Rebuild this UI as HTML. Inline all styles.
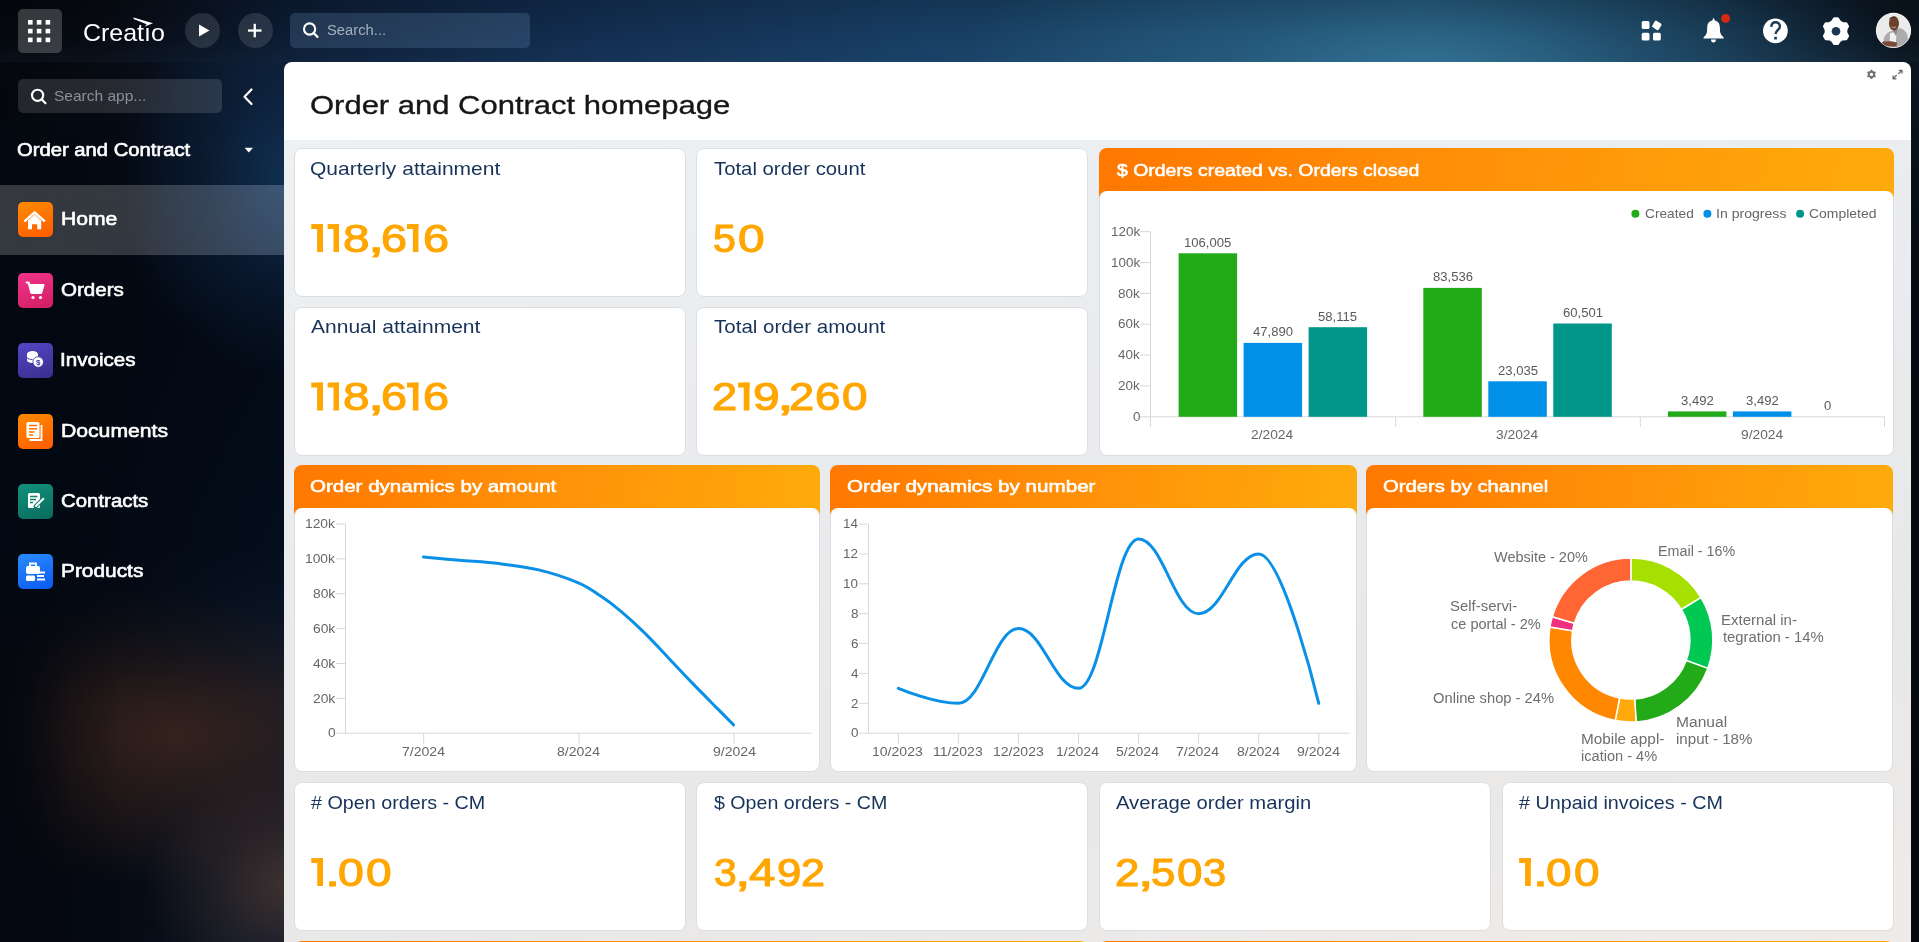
<!DOCTYPE html><html><head><meta charset="utf-8"><style>
*{margin:0;padding:0;box-sizing:border-box}
html,body{width:1919px;height:942px;overflow:hidden;background:#04070c;font-family:"Liberation Sans",sans-serif}
.t{position:absolute;white-space:nowrap;line-height:1;will-change:transform}
.abs{position:absolute}
.card{position:absolute;background:#fff;border:1px solid #dedede;border-radius:8px}
.hcard{position:absolute;border-radius:8px;background:linear-gradient(100deg,#ff7800 0%,#ff9208 50%,#ffab0c 100%) 0 0/100% 60px no-repeat}
.hcard .body{position:absolute;left:0;right:0;bottom:0;background:#fff;border-radius:8px;border:1px solid #dedede;border-top:none}
svg{position:absolute;left:0;top:0;overflow:visible}
</style></head><body><div class="abs" style="left:0;top:0;width:1919px;height:942px;background:radial-gradient(ellipse 140px 120px at 285px 885px, rgba(82,58,46,0.7) 0%, rgba(66,46,38,0.38) 50%, rgba(40,30,26,0) 100%),radial-gradient(ellipse 70px 900px at 0px 900px, rgba(4,8,18,0.9) 0%, rgba(4,8,18,0) 100%),radial-gradient(ellipse 300px 150px at 175px 735px, rgba(56,35,29,0.92) 0%, rgba(46,30,26,0.62) 45%, rgba(24,18,18,0) 100%),radial-gradient(ellipse 170px 110px at 60px 920px, rgba(5,9,18,0.85) 0%, rgba(5,9,18,0) 100%),radial-gradient(ellipse 470px 190px at 1430px 80px, rgba(52,118,152,0.85) 0%, rgba(42,100,135,0.5) 45%, rgba(30,70,100,0) 100%),linear-gradient(90deg,#04070c 0%,#070b13 6%,#0c1b32 15%,#122c4e 30%,#173d62 48%,#1b4668 62%,#1f4e6c 74%,#163650 84%,#0e1f30 93%,#0a121b 100%)"></div>
<div class="abs" style="left:0;top:0;width:1919px;height:62px;background:linear-gradient(180deg,rgba(0,0,0,0.14) 0%,rgba(0,0,0,0) 55%,rgba(80,150,200,0.06) 100%)"></div>
<div class="abs" style="left:1905px;top:62px;width:14px;height:880px;background:linear-gradient(180deg,#0b1520 0%,#070b11 25%,#05080c 100%)"></div>
<div class="abs" style="left:0;top:62px;width:284px;height:880px;background:linear-gradient(180deg,rgba(2,8,18,0) 0%,rgba(2,8,18,0.5) 12%,rgba(2,8,18,0.85) 30%,rgba(2,9,20,0.75) 55%,rgba(4,10,22,0) 72%)"></div>
<div class="abs" style="left:0;top:62px;width:284px;height:400px;background:radial-gradient(ellipse 170px 200px at 290px 115px, rgba(20,56,96,0.78) 0%, rgba(16,44,78,0.4) 50%, rgba(10,25,45,0) 100%)"></div>
<div class="abs" style="left:0;top:600px;width:120px;height:342px;background:linear-gradient(90deg,rgba(4,7,14,0.7),rgba(4,7,14,0))"></div>
<div class="abs" style="left:18px;top:9px;width:44px;height:44px;border-radius:5px;background:rgba(255,255,255,0.2)"></div>
<svg width="1919" height="62"><rect x="28.0" y="20.0" width="4.6" height="4.6" fill="#fff"/><rect x="36.8" y="20.0" width="4.6" height="4.6" fill="#fff"/><rect x="45.6" y="20.0" width="4.6" height="4.6" fill="#fff"/><rect x="28.0" y="28.8" width="4.6" height="4.6" fill="#fff"/><rect x="36.8" y="28.8" width="4.6" height="4.6" fill="#fff"/><rect x="45.6" y="28.8" width="4.6" height="4.6" fill="#fff"/><rect x="28.0" y="37.6" width="4.6" height="4.6" fill="#fff"/><rect x="36.8" y="37.6" width="4.6" height="4.6" fill="#fff"/><rect x="45.6" y="37.6" width="4.6" height="4.6" fill="#fff"/></svg>
<div class="t" style="left:82.96px;top:21.00px;font-size:24px;color:#ffffff;transform:scaleX(1.0395);transform-origin:0 0;">Creatıo</div>
<svg width="1919" height="62"><path d="M133.6 17.4 L153 23.3 L144.8 26.4 L146.6 24.3 L133.6 19 Z" fill="#fff"/></svg>
<div class="abs" style="left:185px;top:13px;width:35px;height:35px;border-radius:50%;background:rgba(255,255,255,0.12)"></div>
<div class="abs" style="left:237.8px;top:13px;width:35px;height:35px;border-radius:50%;background:rgba(255,255,255,0.12)"></div>
<svg width="1919" height="62"><path d="M199 24.6 L209.5 30.5 L199 36.5 Z" fill="#fff"/><rect x="248" y="29.4" width="13.5" height="2.3" fill="#fff"/><rect x="253.6" y="23.8" width="2.3" height="13.5" fill="#fff"/></svg>
<div class="abs" style="left:290px;top:13px;width:240px;height:35px;border-radius:5px;background:rgba(120,160,200,0.22)"></div>
<svg width="1919" height="62"><circle cx="309.6" cy="29" r="5.6" fill="none" stroke="#fff" stroke-width="2.1"/><path d="M313.6 33 L317.5 36.9" stroke="#fff" stroke-width="2.2" stroke-linecap="round"/></svg>
<div class="t" style="left:326.94px;top:23.00px;font-size:14px;color:#a3b0bd;transform:scaleX(1.0556);transform-origin:0 0;">Search...</div>
<svg width="1919" height="62">
<rect x="1641.7" y="21" width="7.8" height="8.1" rx="1.6" fill="#fff"/>
<rect x="1641.7" y="32.8" width="7.8" height="7.8" rx="1.6" fill="#fff"/>
<rect x="1653" y="32.8" width="7.8" height="7.8" rx="1.6" fill="#fff"/>
<rect x="1653" y="21.6" width="7.6" height="7.6" rx="1.4" fill="#fff" transform="rotate(32 1656.8 25.4)"/>
<path d="M1713.5 17.8 L1714.9 20.4 C1718.6 21.2 1719.8 24 1719.9 27.5 L1720.1 31.8 C1720.4 34 1721.6 35.5 1723.6 37.2 L1723.6 38.4 L1703.6 38.4 L1703.6 37.2 C1705.6 35.5 1706.7 34 1707 31.8 L1707.2 27.5 C1707.3 24 1708.5 21.2 1712.2 20.4 Z M1711 39.6 H1716 C1716 41.3 1715 42.6 1713.5 42.6 C1712 42.6 1711 41.3 1711 39.6 Z" fill="#fff"/>
<circle cx="1725.6" cy="18.4" r="4.4" fill="#d8290f"/>
<circle cx="1775.4" cy="30.8" r="12.4" fill="#fff"/>
<path d="M1771.3 26.9 C1771.5 23.9 1773.3 22.3 1775.6 22.3 C1778.1 22.3 1779.9 24 1779.9 26.4 C1779.9 29.6 1775.6 30.2 1775.6 33.9" fill="none" stroke="#1a3a55" stroke-width="2.4" stroke-linecap="butt"/>
<rect x="1774.2" y="36.7" width="2.7" height="2.7" rx="0.5" fill="#1a3a55"/>
<path d="M1834.33 18.51 L1837.67 18.51 L1839.90 21.78 L1842.21 23.11 L1846.15 23.41 L1847.83 26.30 L1846.11 29.87 L1846.11 32.53 L1847.83 36.10 L1846.15 38.99 L1842.21 39.29 L1839.90 40.62 L1837.67 43.89 L1834.33 43.89 L1832.10 40.62 L1829.79 39.29 L1825.85 38.99 L1824.17 36.10 L1825.89 32.53 L1825.89 29.87 L1824.17 26.30 L1825.85 23.41 L1829.79 23.11 L1832.10 21.78Z" fill="#fff" stroke="#fff" stroke-width="2.4" stroke-linejoin="round"/><circle cx="1836" cy="31.2" r="4.3" fill="#1a3650"/></svg>
<svg width="1919" height="62"><defs><clipPath id="av"><circle cx="1893.5" cy="30.4" r="17"/></clipPath></defs><circle cx="1893.5" cy="30.4" r="17.6" fill="#f7f7f7"/><g clip-path="url(#av)"><rect x="1876" y="13" width="36" height="36" fill="#ecebeb"/><path d="M1881 50 L1884 38 C1886 33 1890 31 1894 30.5 L1899 28 C1903 28.5 1906 31 1907.5 35 L1909 50 Z" fill="#aeabae"/><path d="M1890 33 L1896.5 32 L1895.5 50 L1889.5 50 Z" fill="#f2f2f2"/><path d="M1893 31 L1898 29 L1896 36 Z" fill="#8e8a8e"/><ellipse cx="1894" cy="23.5" rx="5" ry="7.2" fill="#6b412d"/><path d="M1889 20 C1889 15.5 1899 15.5 1899.2 20.5 L1898.5 18.5 C1896 16.5 1891 17 1889.5 19.5 Z" fill="#2a1a14"/><path d="M1891.5 26.8 C1892.8 27.8 1894.8 27.8 1896 26.8" stroke="#d9c2b5" stroke-width="0.8" fill="none"/><path d="M1882 42 C1886 41 1892 41 1897 42.5 L1896.5 46.5 C1891 47 1886 46.5 1882.5 45.5 Z" fill="#7a4a35"/></g></svg>
<div class="abs" style="left:18px;top:79px;width:204px;height:34px;border-radius:5px;background:rgba(255,255,255,0.13)"></div>
<svg width="300" height="200"><circle cx="37.6" cy="95.3" r="5.6" fill="none" stroke="#fff" stroke-width="2.1"/><path d="M41.6 99.3 L45.5 103.2" stroke="#fff" stroke-width="2.2" stroke-linecap="round"/><path d="M251.5 89.5 L244.5 96.8 L251.5 104" fill="none" stroke="#fff" stroke-width="2.2" stroke-linecap="round" stroke-linejoin="round"/><path d="M244.6 147.8 L253 147.8 L248.8 152.6 Z" fill="#fff"/></svg>
<div class="t" style="left:53.97px;top:88.00px;font-size:15px;color:#8c9199;transform:scaleX(1.0345);transform-origin:0 0;">Search app...</div>
<div class="t" style="left:16.58px;top:141.00px;font-size:18px;color:#ffffff;transform:scaleX(1.1242);transform-origin:0 0;-webkit-text-stroke:0.6px #fff;">Order and Contract</div>
<div class="abs" style="left:0;top:185px;width:284px;height:70px;background:linear-gradient(100deg,rgba(255,255,255,0.2) 0%,rgba(255,255,255,0.19) 50%,rgba(175,195,220,0.28) 100%)"></div>
<div class="abs" style="left:18px;top:202px;width:35px;height:35px;border-radius:5px;background:linear-gradient(160deg,#ff8c00,#ff5a00)"></div>
<div class="t" style="left:60.83px;top:210.00px;font-size:18px;color:#ffffff;transform:scaleX(1.1739);transform-origin:0 0;-webkit-text-stroke:0.6px #fff;">Home</div>
<div class="abs" style="left:18px;top:273px;width:35px;height:35px;border-radius:5px;background:linear-gradient(160deg,#f2348a,#d11d62)"></div>
<div class="t" style="left:60.86px;top:281.00px;font-size:18px;color:#ffffff;transform:scaleX(1.1415);transform-origin:0 0;-webkit-text-stroke:0.6px #fff;">Orders</div>
<div class="abs" style="left:18px;top:343px;width:35px;height:35px;border-radius:5px;background:linear-gradient(160deg,#5446c8,#3a2d8a)"></div>
<div class="t" style="left:59.71px;top:351.00px;font-size:18px;color:#ffffff;transform:scaleX(1.1429);transform-origin:0 0;-webkit-text-stroke:0.6px #fff;">Invoices</div>
<div class="abs" style="left:18px;top:413.7px;width:35px;height:35px;border-radius:5px;background:linear-gradient(160deg,#ff8a00,#ff5c00)"></div>
<div class="t" style="left:60.82px;top:422.00px;font-size:18px;color:#ffffff;transform:scaleX(1.1753);transform-origin:0 0;-webkit-text-stroke:0.6px #fff;">Documents</div>
<div class="abs" style="left:18px;top:483.7px;width:35px;height:35px;border-radius:5px;background:linear-gradient(160deg,#11917c,#0b6b5c)"></div>
<div class="t" style="left:60.87px;top:492.00px;font-size:18px;color:#ffffff;transform:scaleX(1.1333);transform-origin:0 0;-webkit-text-stroke:0.6px #fff;">Contracts</div>
<div class="abs" style="left:18px;top:554.1px;width:35px;height:35px;border-radius:5px;background:linear-gradient(160deg,#2a8cff,#0a5aee)"></div>
<div class="t" style="left:60.84px;top:562.00px;font-size:18px;color:#ffffff;transform:scaleX(1.1594);transform-origin:0 0;-webkit-text-stroke:0.6px #fff;">Products</div>
<svg width="300" height="700">
<path d="M25 220.8 L34.6 212.3 L44.2 220.8" fill="none" stroke="#fff" stroke-width="2.4" stroke-linecap="round" stroke-linejoin="round"/>
<path d="M28 220.5 L34.6 214.6 L41.2 220.5 V229.2 H37.2 V224.2 H32 V229.2 H28 Z" fill="#fff"/>
<path d="M25.8 282.5 H28.6 L31.5 293 H41 L43.5 285 H30" fill="none" stroke="#fff" stroke-width="2.2" stroke-linejoin="round"/>
<path d="M30 285 H43.5 L41 293 H31.5 Z" fill="#fff"/>
<circle cx="33" cy="297.5" r="1.6" fill="#fff"/><circle cx="40.5" cy="297.5" r="1.6" fill="#fff"/>
<ellipse cx="32.5" cy="354" rx="5.5" ry="3" fill="#fff"/>
<path d="M27 354 v6 c0 1.8 2.5 3 5.5 3 c3 0 5.5 -1.2 5.5 -3 v-6" fill="#fff"/>
<path d="M27 357.5 c1 1.4 3 2 5.5 2" stroke="#4a3cb0" stroke-width="1" fill="none"/>
<circle cx="38.2" cy="362" r="5.3" fill="#fff" stroke="#4030a0" stroke-width="0.8"/>
<text x="38.2" y="365" font-size="8" font-weight="700" fill="#4030a0" text-anchor="middle" font-family="Liberation Sans">$</text>
<rect x="26.5" y="422" width="13" height="16" rx="1.5" fill="#fff"/>
<path d="M41.5 425 V440 H29.5" fill="none" stroke="#fff" stroke-width="1.8"/>
<path d="M29 425.5 H37 M29 428.7 H37 M29 432 H34.5 M29 435 H33" stroke="#ff7000" stroke-width="1.4"/>
<rect x="28" y="493" width="12" height="15" rx="1.5" fill="#fff"/>
<path d="M30 496.5 H37.5 M30 499.5 H36 M30 502.5 H33" stroke="#0e8070" stroke-width="1.5"/>
<path d="M43.5 498.5 L35.5 506.5" stroke="#0e8070" stroke-width="4" stroke-linecap="round"/>
<path d="M43.3 498.7 L36 506" stroke="#fff" stroke-width="2" stroke-linecap="round"/>
<rect x="26" y="566" width="14" height="8" rx="2" fill="#fff"/>
<path d="M30 566 V563.5 H36 V566" fill="none" stroke="#fff" stroke-width="1.8"/>
<rect x="26" y="575.5" width="9" height="5.5" rx="1.5" fill="#fff"/>
<path d="M36.5 572.5 H45 M37 576 H44 M37 579.5 H45" stroke="#fff" stroke-width="1.8"/>
</svg>
<div class="abs" style="left:284px;top:62px;width:1627px;height:880px;border-radius:8px 8px 0 0;background:#fff;overflow:hidden"><div class="abs" style="left:0;top:78px;width:1627px;height:802px;background:linear-gradient(170deg,#edf1f4 0%,#e9ebee 40%,#e8e8e8 70%,#efebe8 100%)"></div></div>
<div class="t" style="left:309.81px;top:92.00px;font-size:26px;color:#161616;transform:scaleX(1.1914);transform-origin:0 0;font-weight:400;-webkit-text-stroke:0.35px #161616;">Order and Contract homepage</div>
<svg width="1919" height="100"><path d="M1870.89 69.74 L1872.11 69.74 L1872.88 71.07 L1873.69 71.54 L1875.23 71.54 L1875.84 72.60 L1875.07 73.93 L1875.07 74.87 L1875.84 76.20 L1875.23 77.26 L1873.69 77.26 L1872.88 77.73 L1872.11 79.06 L1870.89 79.06 L1870.12 77.73 L1869.31 77.26 L1867.77 77.26 L1867.16 76.20 L1867.93 74.87 L1867.93 73.93 L1867.16 72.60 L1867.77 71.54 L1869.31 71.54 L1870.12 71.07Z" fill="#707070"/><circle cx="1871.5" cy="74.4" r="1.7" fill="#fff"/><path d="M1898.3 73.9 L1901.6 70.6 M1898.8 70.3 H1902 V73.5 M1896.7 75.1 L1893.4 78.4 M1893.1 75.5 V78.7 H1896.3" fill="none" stroke="#6f6f6f" stroke-width="1.35"/></svg>
<div class="card" style="left:293.5px;top:148.3px;width:392px;height:149px"></div>
<div class="t" style="left:309.82px;top:161.00px;font-size:17.8px;color:#17335a;transform:scaleX(1.1812);transform-origin:0 0;">Quarterly attainment</div>
<div class="t" style="left:343.01px;top:219.00px;font-size:39px;color:#ffa600;transform:scaleX(1.2222);transform-origin:0 0;-webkit-text-stroke:1.1px #ffa600;">8</div>
<div class="t" style="left:368.25px;top:219.00px;font-size:39px;color:#ffa600;transform:scaleX(1.5000);transform-origin:0 0;-webkit-text-stroke:1.1px #ffa600;">,</div>
<div class="t" style="left:380.95px;top:219.00px;font-size:39px;color:#ffa600;transform:scaleX(1.2000);transform-origin:0 0;-webkit-text-stroke:1.1px #ffa600;">6</div>
<div class="t" style="left:423.15px;top:219.00px;font-size:39px;color:#ffa600;transform:scaleX(1.2000);transform-origin:0 0;-webkit-text-stroke:1.1px #ffa600;">6</div>
<svg width="1919" height="942"><rect x="311.25" y="224.10" width="11.75" height="4.9" fill="#ffa600"/><rect x="317.10" y="224.10" width="5.90" height="27.90" fill="#ffa600"/><rect x="327.70" y="224.10" width="11.30" height="4.9" fill="#ffa600"/><rect x="333.50" y="224.10" width="5.50" height="27.90" fill="#ffa600"/><rect x="407.00" y="224.10" width="11.40" height="4.9" fill="#ffa600"/><rect x="412.90" y="224.10" width="5.50" height="27.90" fill="#ffa600"/></svg>
<div class="card" style="left:696.2px;top:148.3px;width:392px;height:149px"></div>
<div class="t" style="left:713.70px;top:161.00px;font-size:17.8px;color:#17335a;transform:scaleX(1.1429);transform-origin:0 0;">Total order count</div>
<div class="t" style="left:712.74px;top:219.00px;font-size:39px;color:#ffa600;transform:scaleX(1.0556);transform-origin:0 0;-webkit-text-stroke:1.1px #ffa600;">5</div>
<div class="t" style="left:738.22px;top:219.00px;font-size:39px;color:#ffa600;transform:scaleX(1.2263);transform-origin:0 0;-webkit-text-stroke:1.1px #ffa600;">0</div>
<div class="card" style="left:293.5px;top:306.8px;width:392px;height:149px"></div>
<div class="t" style="left:311.00px;top:319.00px;font-size:17.8px;color:#17335a;transform:scaleX(1.1818);transform-origin:0 0;">Annual attainment</div>
<div class="t" style="left:343.01px;top:377.00px;font-size:39px;color:#ffa600;transform:scaleX(1.2222);transform-origin:0 0;-webkit-text-stroke:1.1px #ffa600;">8</div>
<div class="t" style="left:368.25px;top:377.00px;font-size:39px;color:#ffa600;transform:scaleX(1.5000);transform-origin:0 0;-webkit-text-stroke:1.1px #ffa600;">,</div>
<div class="t" style="left:380.95px;top:377.00px;font-size:39px;color:#ffa600;transform:scaleX(1.2000);transform-origin:0 0;-webkit-text-stroke:1.1px #ffa600;">6</div>
<div class="t" style="left:423.15px;top:377.00px;font-size:39px;color:#ffa600;transform:scaleX(1.2000);transform-origin:0 0;-webkit-text-stroke:1.1px #ffa600;">6</div>
<svg width="1919" height="942"><rect x="311.25" y="382.60" width="11.75" height="4.9" fill="#ffa600"/><rect x="317.10" y="382.60" width="5.90" height="27.90" fill="#ffa600"/><rect x="327.70" y="382.60" width="11.30" height="4.9" fill="#ffa600"/><rect x="333.50" y="382.60" width="5.50" height="27.90" fill="#ffa600"/><rect x="407.00" y="382.60" width="11.40" height="4.9" fill="#ffa600"/><rect x="412.90" y="382.60" width="5.50" height="27.90" fill="#ffa600"/></svg>
<div class="card" style="left:696.2px;top:306.8px;width:392px;height:149px"></div>
<div class="t" style="left:713.70px;top:319.00px;font-size:17.8px;color:#17335a;transform:scaleX(1.1554);transform-origin:0 0;">Total order amount</div>
<div class="t" style="left:712.23px;top:377.00px;font-size:39px;color:#ffa600;transform:scaleX(1.1611);transform-origin:0 0;-webkit-text-stroke:1.1px #ffa600;">2</div>
<div class="t" style="left:752.78px;top:377.00px;font-size:39px;color:#ffa600;transform:scaleX(1.2333);transform-origin:0 0;-webkit-text-stroke:1.1px #ffa600;">9</div>
<div class="t" style="left:776.60px;top:377.00px;font-size:39px;color:#ffa600;transform:scaleX(1.5500);transform-origin:0 0;-webkit-text-stroke:1.1px #ffa600;">,</div>
<div class="t" style="left:789.23px;top:377.00px;font-size:39px;color:#ffa600;transform:scaleX(1.1611);transform-origin:0 0;-webkit-text-stroke:1.1px #ffa600;">2</div>
<div class="t" style="left:814.89px;top:377.00px;font-size:39px;color:#ffa600;transform:scaleX(1.1778);transform-origin:0 0;-webkit-text-stroke:1.1px #ffa600;">6</div>
<div class="t" style="left:841.58px;top:377.00px;font-size:39px;color:#ffa600;transform:scaleX(1.1737);transform-origin:0 0;-webkit-text-stroke:1.1px #ffa600;">0</div>
<svg width="1919" height="942"><rect x="738.00" y="382.60" width="11.50" height="4.9" fill="#ffa600"/><rect x="743.75" y="382.60" width="5.75" height="27.90" fill="#ffa600"/></svg>
<div class="card" style="left:293.5px;top:782.3px;width:392px;height:149px"></div>
<div class="t" style="left:311.00px;top:795.00px;font-size:17.8px;color:#17335a;transform:scaleX(1.1090);transform-origin:0 0;"># Open orders - CM</div>
<div class="t" style="left:325.35px;top:853.00px;font-size:39px;color:#ffa600;transform:scaleX(1.4000);transform-origin:0 0;-webkit-text-stroke:1.1px #ffa600;">.</div>
<div class="t" style="left:338.46px;top:853.00px;font-size:39px;color:#ffa600;transform:scaleX(1.1895);transform-origin:0 0;-webkit-text-stroke:1.1px #ffa600;">0</div>
<div class="t" style="left:366.37px;top:853.00px;font-size:39px;color:#ffa600;transform:scaleX(1.1789);transform-origin:0 0;-webkit-text-stroke:1.1px #ffa600;">0</div>
<svg width="1919" height="942"><rect x="311.25" y="858.10" width="11.75" height="4.9" fill="#ffa600"/><rect x="317.25" y="858.10" width="5.75" height="27.90" fill="#ffa600"/></svg>
<div class="card" style="left:696.2px;top:782.3px;width:392px;height:149px"></div>
<div class="t" style="left:713.70px;top:795.00px;font-size:17.8px;color:#17335a;transform:scaleX(1.1026);transform-origin:0 0;">$ Open orders - CM</div>
<div class="t" style="left:713.60px;top:853.00px;font-size:39px;color:#ffa600;transform:scaleX(1.0474);transform-origin:0 0;-webkit-text-stroke:1.1px #ffa600;">3</div>
<div class="t" style="left:735.48px;top:853.00px;font-size:39px;color:#ffa600;transform:scaleX(1.4250);transform-origin:0 0;-webkit-text-stroke:1.1px #ffa600;">,</div>
<div class="t" style="left:748.73px;top:853.00px;font-size:39px;color:#ffa600;transform:scaleX(1.2150);transform-origin:0 0;-webkit-text-stroke:1.1px #ffa600;">4</div>
<div class="t" style="left:776.51px;top:853.00px;font-size:39px;color:#ffa600;transform:scaleX(1.1222);transform-origin:0 0;-webkit-text-stroke:1.1px #ffa600;">9</div>
<div class="t" style="left:801.24px;top:853.00px;font-size:39px;color:#ffa600;transform:scaleX(1.1056);transform-origin:0 0;-webkit-text-stroke:1.1px #ffa600;">2</div>
<div class="card" style="left:1098.9px;top:782.3px;width:392px;height:149px"></div>
<div class="t" style="left:1116.40px;top:795.00px;font-size:17.8px;color:#17335a;transform:scaleX(1.1368);transform-origin:0 0;">Average order margin</div>
<div class="t" style="left:1115.11px;top:853.00px;font-size:39px;color:#ffa600;transform:scaleX(1.1222);transform-origin:0 0;-webkit-text-stroke:1.1px #ffa600;">2</div>
<div class="t" style="left:1138.48px;top:853.00px;font-size:39px;color:#ffa600;transform:scaleX(1.4250);transform-origin:0 0;-webkit-text-stroke:1.1px #ffa600;">,</div>
<div class="t" style="left:1150.71px;top:853.00px;font-size:39px;color:#ffa600;transform:scaleX(1.1222);transform-origin:0 0;-webkit-text-stroke:1.1px #ffa600;">5</div>
<div class="t" style="left:1176.78px;top:853.00px;font-size:39px;color:#ffa600;transform:scaleX(1.1737);transform-origin:0 0;-webkit-text-stroke:1.1px #ffa600;">0</div>
<div class="t" style="left:1202.98px;top:853.00px;font-size:39px;color:#ffa600;transform:scaleX(1.0684);transform-origin:0 0;-webkit-text-stroke:1.1px #ffa600;">3</div>
<div class="card" style="left:1501.6px;top:782.3px;width:392px;height:149px"></div>
<div class="t" style="left:1519.10px;top:795.00px;font-size:17.8px;color:#17335a;transform:scaleX(1.1093);transform-origin:0 0;"># Unpaid invoices - CM</div>
<div class="t" style="left:1533.22px;top:853.00px;font-size:39px;color:#ffa600;transform:scaleX(1.3750);transform-origin:0 0;-webkit-text-stroke:1.1px #ffa600;">.</div>
<div class="t" style="left:1546.38px;top:853.00px;font-size:39px;color:#ffa600;transform:scaleX(1.1737);transform-origin:0 0;-webkit-text-stroke:1.1px #ffa600;">0</div>
<div class="t" style="left:1574.28px;top:853.00px;font-size:39px;color:#ffa600;transform:scaleX(1.1737);transform-origin:0 0;-webkit-text-stroke:1.1px #ffa600;">0</div>
<svg width="1919" height="942"><rect x="1519.10" y="858.10" width="11.70" height="4.9" fill="#ffa600"/><rect x="1525.10" y="858.10" width="5.70" height="27.90" fill="#ffa600"/></svg>
<div class="hcard" style="left:1098.9px;top:148.3px;width:794.7px;height:307.5px"><div class="body" style="top:42.5px"></div></div>
<div class="t" style="left:1116.90px;top:162.00px;font-size:17px;color:#ffffff;transform:scaleX(1.1426);transform-origin:0 0;-webkit-text-stroke:0.55px #fff;">$ Orders created vs. Orders closed</div>
<div class="hcard" style="left:293.5px;top:465.3px;width:526.5px;height:306.5px"><div class="body" style="top:42.5px"></div></div>
<div class="t" style="left:310.29px;top:478.00px;font-size:17px;color:#ffffff;transform:scaleX(1.2069);transform-origin:0 0;-webkit-text-stroke:0.55px #fff;">Order dynamics by amount</div>
<div class="hcard" style="left:829.8px;top:465.3px;width:527px;height:306.5px"><div class="body" style="top:42.5px"></div></div>
<div class="t" style="left:846.59px;top:478.00px;font-size:17px;color:#ffffff;transform:scaleX(1.2118);transform-origin:0 0;-webkit-text-stroke:0.55px #fff;">Order dynamics by number</div>
<div class="hcard" style="left:1366.4px;top:465.3px;width:526.8px;height:306.5px"><div class="body" style="top:42.5px"></div></div>
<div class="t" style="left:1383.21px;top:478.00px;font-size:17px;color:#ffffff;transform:scaleX(1.1898);transform-origin:0 0;-webkit-text-stroke:0.55px #fff;">Orders by channel</div>
<div class="hcard" style="left:293.5px;top:940.6px;width:794.7px;height:306px"><div class="body" style="top:42.5px"></div></div>
<div class="hcard" style="left:1098.9px;top:940.6px;width:794.7px;height:306px"><div class="body" style="top:42.5px"></div></div>
<div class="t" style="left:1132.98px;top:411.00px;font-size:12px;color:#666666;transform:scaleX(1.1200);transform-origin:0 0;">0</div>
<div class="t" style="left:1118.42px;top:380.00px;font-size:12px;color:#666666;transform:scaleX(1.1200);transform-origin:0 0;">20k</div>
<div class="t" style="left:1118.42px;top:349.00px;font-size:12px;color:#666666;transform:scaleX(1.1200);transform-origin:0 0;">40k</div>
<div class="t" style="left:1118.42px;top:318.00px;font-size:12px;color:#666666;transform:scaleX(1.1200);transform-origin:0 0;">60k</div>
<div class="t" style="left:1118.42px;top:288.00px;font-size:12px;color:#666666;transform:scaleX(1.1200);transform-origin:0 0;">80k</div>
<div class="t" style="left:1110.58px;top:257.00px;font-size:12px;color:#666666;transform:scaleX(1.1200);transform-origin:0 0;">100k</div>
<div class="t" style="left:1110.58px;top:226.00px;font-size:12px;color:#666666;transform:scaleX(1.1200);transform-origin:0 0;">120k</div>
<div class="t" style="left:1183.86px;top:237.00px;font-size:12px;color:#5a5a5a;transform:scaleX(1.0900);transform-origin:0 0;">106,005</div>
<div class="t" style="left:1253.22px;top:326.00px;font-size:12px;color:#5a5a5a;transform:scaleX(1.0900);transform-origin:0 0;">47,890</div>
<div class="t" style="left:1318.22px;top:311.00px;font-size:12px;color:#5a5a5a;transform:scaleX(1.0900);transform-origin:0 0;">58,115</div>
<div class="t" style="left:1432.89px;top:271.00px;font-size:12px;color:#5a5a5a;transform:scaleX(1.0900);transform-origin:0 0;">83,536</div>
<div class="t" style="left:1497.89px;top:365.00px;font-size:12px;color:#5a5a5a;transform:scaleX(1.0900);transform-origin:0 0;">23,035</div>
<div class="t" style="left:1562.89px;top:307.00px;font-size:12px;color:#5a5a5a;transform:scaleX(1.0900);transform-origin:0 0;">60,501</div>
<div class="t" style="left:1680.83px;top:395.00px;font-size:12px;color:#5a5a5a;transform:scaleX(1.0900);transform-origin:0 0;">3,492</div>
<div class="t" style="left:1745.83px;top:395.00px;font-size:12px;color:#5a5a5a;transform:scaleX(1.0900);transform-origin:0 0;">3,492</div>
<div class="t" style="left:1823.90px;top:400.00px;font-size:12px;color:#5a5a5a;transform:scaleX(1.0900);transform-origin:0 0;">0</div>
<div class="t" style="left:1251.11px;top:428.00px;font-size:13px;color:#666666;transform:scaleX(1.0600);transform-origin:0 0;">2/2024</div>
<div class="t" style="left:1495.78px;top:428.00px;font-size:13px;color:#666666;transform:scaleX(1.0600);transform-origin:0 0;">3/2024</div>
<div class="t" style="left:1740.97px;top:428.00px;font-size:13px;color:#666666;transform:scaleX(1.0600);transform-origin:0 0;">9/2024</div>
<div class="t" style="left:1644.54px;top:207.00px;font-size:13px;color:#666666;transform:scaleX(1.0556);transform-origin:0 0;">Created</div>
<div class="t" style="left:1715.82px;top:207.00px;font-size:13px;color:#666666;transform:scaleX(1.0828);transform-origin:0 0;">In progress</div>
<div class="t" style="left:1808.93px;top:207.00px;font-size:13px;color:#666666;transform:scaleX(1.0726);transform-origin:0 0;">Completed</div>
<svg width="1919" height="942"><path d="M1150.5 231.7 V416.8 M1150.5 416.8 V427 M1395.7 416.8 V427 M1640.3 416.8 V427 M1884.5 416.8 V427 M1150 416.8 H1884.5" stroke="#d8d8d8" stroke-width="1" fill="none"/><path d="M1140 416.8 H1150.5" stroke="#d8d8d8" stroke-width="1"/><path d="M1140 385.9 H1150.5" stroke="#d8d8d8" stroke-width="1"/><path d="M1140 355.1 H1150.5" stroke="#d8d8d8" stroke-width="1"/><path d="M1140 324.2 H1150.5" stroke="#d8d8d8" stroke-width="1"/><path d="M1140 293.4 H1150.5" stroke="#d8d8d8" stroke-width="1"/><path d="M1140 262.6 H1150.5" stroke="#d8d8d8" stroke-width="1"/><path d="M1140 231.7 H1150.5" stroke="#d8d8d8" stroke-width="1"/><rect x="1178.6" y="253.3" width="58.5" height="163.5" fill="#22aa18"/><rect x="1243.6" y="342.9" width="58.5" height="73.9" fill="#0090e8"/><rect x="1308.6" y="327.2" width="58.5" height="89.6" fill="#00968a"/><rect x="1423.3" y="287.9" width="58.5" height="128.9" fill="#22aa18"/><rect x="1488.3" y="381.3" width="58.5" height="35.5" fill="#0090e8"/><rect x="1553.3" y="323.5" width="58.5" height="93.3" fill="#00968a"/><rect x="1667.9" y="411.4" width="58.5" height="5.4" fill="#22aa18"/><rect x="1732.9" y="411.4" width="58.5" height="5.4" fill="#0090e8"/><circle cx="1635.4" cy="213.7" r="4" fill="#22aa18"/><circle cx="1707.4" cy="213.7" r="4" fill="#0090e8"/><circle cx="1800.1" cy="213.7" r="4" fill="#00968a"/></svg>
<div class="t" style="left:328.10px;top:727.00px;font-size:12px;color:#666666;transform:scaleX(1.1500);transform-origin:0 0;">0</div>
<div class="t" style="left:313.15px;top:693.00px;font-size:12px;color:#666666;transform:scaleX(1.1500);transform-origin:0 0;">20k</div>
<div class="t" style="left:313.15px;top:658.00px;font-size:12px;color:#666666;transform:scaleX(1.1500);transform-origin:0 0;">40k</div>
<div class="t" style="left:313.15px;top:623.00px;font-size:12px;color:#666666;transform:scaleX(1.1500);transform-origin:0 0;">60k</div>
<div class="t" style="left:313.15px;top:588.00px;font-size:12px;color:#666666;transform:scaleX(1.1500);transform-origin:0 0;">80k</div>
<div class="t" style="left:305.10px;top:553.00px;font-size:12px;color:#666666;transform:scaleX(1.1500);transform-origin:0 0;">100k</div>
<div class="t" style="left:305.10px;top:518.00px;font-size:12px;color:#666666;transform:scaleX(1.1500);transform-origin:0 0;">120k</div>
<div class="t" style="left:401.56px;top:745.00px;font-size:13px;color:#666666;transform:scaleX(1.0800);transform-origin:0 0;">7/2024</div>
<div class="t" style="left:557.40px;top:745.00px;font-size:13px;color:#666666;transform:scaleX(1.0800);transform-origin:0 0;">8/2024</div>
<div class="t" style="left:712.50px;top:745.00px;font-size:13px;color:#666666;transform:scaleX(1.0800);transform-origin:0 0;">9/2024</div>
<svg width="1919" height="942"><path d="M345.5 524 V733.2 M345 733.2 H812" stroke="#d8d8d8" stroke-width="1" fill="none"/><path d="M336 733.2 H345.5" stroke="#d8d8d8" stroke-width="1"/><path d="M336 698.3 H345.5" stroke="#d8d8d8" stroke-width="1"/><path d="M336 663.5 H345.5" stroke="#d8d8d8" stroke-width="1"/><path d="M336 628.6 H345.5" stroke="#d8d8d8" stroke-width="1"/><path d="M336 593.7 H345.5" stroke="#d8d8d8" stroke-width="1"/><path d="M336 558.9 H345.5" stroke="#d8d8d8" stroke-width="1"/><path d="M336 524.0 H345.5" stroke="#d8d8d8" stroke-width="1"/><path d="M423.7 733.2 V744" stroke="#d8d8d8" stroke-width="1"/><path d="M579.0 733.2 V744" stroke="#d8d8d8" stroke-width="1"/><path d="M734.1 733.2 V744" stroke="#d8d8d8" stroke-width="1"/><path d="M 423.40 557.00 C 429.42 557.55 446.90 559.20 459.50 560.30 C 472.10 561.40 485.80 562.00 499.00 563.60 C 512.20 565.20 525.48 566.70 538.70 569.90 C 551.92 573.10 568.08 578.52 578.30 582.80 C 588.52 587.08 593.08 591.00 600.00 595.60 C 606.92 600.20 612.42 604.23 619.80 610.40 C 627.18 616.57 636.15 624.63 644.30 632.60 C 652.45 640.57 660.57 649.65 668.70 658.20 C 676.83 666.75 684.97 675.50 693.10 683.90 C 701.23 692.30 710.75 701.77 717.50 708.60 C 724.25 715.43 730.92 722.18 733.60 724.90" fill="none" stroke="#0a90e6" stroke-width="3" stroke-linecap="round" stroke-linejoin="round"/></svg>
<div class="t" style="left:850.58px;top:727.00px;font-size:12px;color:#666666;transform:scaleX(1.1200);transform-origin:0 0;">0</div>
<div class="t" style="left:850.58px;top:698.00px;font-size:12px;color:#666666;transform:scaleX(1.1200);transform-origin:0 0;">2</div>
<div class="t" style="left:850.58px;top:668.00px;font-size:12px;color:#666666;transform:scaleX(1.1200);transform-origin:0 0;">4</div>
<div class="t" style="left:850.58px;top:638.00px;font-size:12px;color:#666666;transform:scaleX(1.1200);transform-origin:0 0;">6</div>
<div class="t" style="left:850.58px;top:608.00px;font-size:12px;color:#666666;transform:scaleX(1.1200);transform-origin:0 0;">8</div>
<div class="t" style="left:842.74px;top:578.00px;font-size:12px;color:#666666;transform:scaleX(1.1200);transform-origin:0 0;">10</div>
<div class="t" style="left:842.74px;top:548.00px;font-size:12px;color:#666666;transform:scaleX(1.1200);transform-origin:0 0;">12</div>
<div class="t" style="left:842.74px;top:518.00px;font-size:12px;color:#666666;transform:scaleX(1.1200);transform-origin:0 0;">14</div>
<div class="t" style="left:872.41px;top:745.00px;font-size:13px;color:#666666;transform:scaleX(1.0800);transform-origin:0 0;">10/2023</div>
<div class="t" style="left:933.01px;top:745.00px;font-size:13px;color:#666666;transform:scaleX(1.0800);transform-origin:0 0;">11/2023</div>
<div class="t" style="left:992.53px;top:745.00px;font-size:13px;color:#666666;transform:scaleX(1.0800);transform-origin:0 0;">12/2023</div>
<div class="t" style="left:1056.37px;top:745.00px;font-size:13px;color:#666666;transform:scaleX(1.0800);transform-origin:0 0;">1/2024</div>
<div class="t" style="left:1116.43px;top:745.00px;font-size:13px;color:#666666;transform:scaleX(1.0800);transform-origin:0 0;">5/2024</div>
<div class="t" style="left:1176.49px;top:745.00px;font-size:13px;color:#666666;transform:scaleX(1.0800);transform-origin:0 0;">7/2024</div>
<div class="t" style="left:1237.09px;top:745.00px;font-size:13px;color:#666666;transform:scaleX(1.0800);transform-origin:0 0;">8/2024</div>
<div class="t" style="left:1297.15px;top:745.00px;font-size:13px;color:#666666;transform:scaleX(1.0800);transform-origin:0 0;">9/2024</div>
<svg width="1919" height="942"><path d="M868.5 524 V733.2 M868 733.2 H1349" stroke="#d8d8d8" stroke-width="1" fill="none"/><path d="M859 733.2 H868.5" stroke="#d8d8d8" stroke-width="1"/><path d="M859 703.3 H868.5" stroke="#d8d8d8" stroke-width="1"/><path d="M859 673.4 H868.5" stroke="#d8d8d8" stroke-width="1"/><path d="M859 643.5 H868.5" stroke="#d8d8d8" stroke-width="1"/><path d="M859 613.7 H868.5" stroke="#d8d8d8" stroke-width="1"/><path d="M859 583.8 H868.5" stroke="#d8d8d8" stroke-width="1"/><path d="M859 553.9 H868.5" stroke="#d8d8d8" stroke-width="1"/><path d="M859 524.0 H868.5" stroke="#d8d8d8" stroke-width="1"/><path d="M898.3 733.2 V744" stroke="#d8d8d8" stroke-width="1"/><path d="M958.4 733.2 V744" stroke="#d8d8d8" stroke-width="1"/><path d="M1018.4 733.2 V744" stroke="#d8d8d8" stroke-width="1"/><path d="M1078.5 733.2 V744" stroke="#d8d8d8" stroke-width="1"/><path d="M1138.6 733.2 V744" stroke="#d8d8d8" stroke-width="1"/><path d="M1198.6 733.2 V744" stroke="#d8d8d8" stroke-width="1"/><path d="M1258.7 733.2 V744" stroke="#d8d8d8" stroke-width="1"/><path d="M1318.8 733.2 V744" stroke="#d8d8d8" stroke-width="1"/><path d="M 898.33 688.37 C 898.33 688.37 934.37 703.31 958.39 703.31 C 982.41 703.31 994.43 628.60 1018.45 628.60 C 1042.47 628.60 1054.49 688.37 1078.51 688.37 C 1102.53 688.37 1114.55 538.94 1138.57 538.94 C 1162.59 538.94 1174.61 613.66 1198.63 613.66 C 1222.65 613.66 1234.67 553.89 1258.69 553.89 C 1282.71 553.89 1318.75 703.31 1318.75 703.31" fill="none" stroke="#0a90e6" stroke-width="3" stroke-linecap="round" stroke-linejoin="round"/></svg>
<svg width="1919" height="942"><path d="M1630.90 558.10 A82 82 0 0 1 1701.02 597.59 L1681.35 609.51 A59 59 0 0 0 1630.90 581.10 Z" fill="#a6e000" stroke="#fff" stroke-width="1.5" stroke-linejoin="round"/><path d="M1701.02 597.59 A82 82 0 0 1 1707.85 668.42 L1686.27 660.48 A59 59 0 0 0 1681.35 609.51 Z" fill="#00c853" stroke="#fff" stroke-width="1.5" stroke-linejoin="round"/><path d="M1707.85 668.42 A82 82 0 0 1 1636.15 721.93 L1634.68 698.98 A59 59 0 0 0 1686.27 660.48 Z" fill="#22aa18" stroke="#fff" stroke-width="1.5" stroke-linejoin="round"/><path d="M1636.15 721.93 A82 82 0 0 1 1615.22 720.59 L1619.62 698.01 A59 59 0 0 0 1634.68 698.98 Z" fill="#ffaa0a" stroke="#fff" stroke-width="1.5" stroke-linejoin="round"/><path d="M1615.22 720.59 A82 82 0 0 1 1549.95 627.01 L1572.66 630.68 A59 59 0 0 0 1619.62 698.01 Z" fill="#ff8800" stroke="#fff" stroke-width="1.5" stroke-linejoin="round"/><path d="M1549.95 627.01 A82 82 0 0 1 1552.29 616.77 L1574.34 623.31 A59 59 0 0 0 1572.66 630.68 Z" fill="#f0307f" stroke="#fff" stroke-width="1.5" stroke-linejoin="round"/><path d="M1552.29 616.77 A82 82 0 0 1 1630.90 558.10 L1630.90 581.10 A59 59 0 0 0 1574.34 623.31 Z" fill="#ff6633" stroke="#fff" stroke-width="1.5" stroke-linejoin="round"/></svg>
<div class="t" style="left:1493.90px;top:550.00px;font-size:14px;color:#6e6e6e;transform:scaleX(1.0333);transform-origin:0 0;">Website - 20%</div>
<div class="t" style="left:1658.48px;top:544.00px;font-size:14px;color:#6e6e6e;transform:scaleX(1.0230);transform-origin:0 0;">Email - 16%</div>
<div class="t" style="left:1450.03px;top:599.00px;font-size:14px;color:#6e6e6e;transform:scaleX(1.0656);transform-origin:0 0;">Self-servi-</div>
<div class="t" style="left:1451.10px;top:617.00px;font-size:14px;color:#6e6e6e;transform:scaleX(1.0395);transform-origin:0 0;">ce portal - 2%</div>
<div class="t" style="left:1721.43px;top:613.00px;font-size:14px;color:#6e6e6e;transform:scaleX(1.0725);transform-origin:0 0;">External in-</div>
<div class="t" style="left:1722.50px;top:630.00px;font-size:14px;color:#6e6e6e;transform:scaleX(1.0596);transform-origin:0 0;">tegration - 14%</div>
<div class="t" style="left:1433.45px;top:691.00px;font-size:14px;color:#6e6e6e;transform:scaleX(1.0509);transform-origin:0 0;">Online shop - 24%</div>
<div class="t" style="left:1675.79px;top:715.00px;font-size:14px;color:#6e6e6e;transform:scaleX(1.1136);transform-origin:0 0;">Manual</div>
<div class="t" style="left:1675.82px;top:732.00px;font-size:14px;color:#6e6e6e;transform:scaleX(1.0783);transform-origin:0 0;">input - 18%</div>
<div class="t" style="left:1580.71px;top:732.00px;font-size:14px;color:#6e6e6e;transform:scaleX(1.0933);transform-origin:0 0;">Mobile appl-</div>
<div class="t" style="left:1580.76px;top:749.00px;font-size:14px;color:#6e6e6e;transform:scaleX(1.0417);transform-origin:0 0;">ication - 4%</div></body></html>
